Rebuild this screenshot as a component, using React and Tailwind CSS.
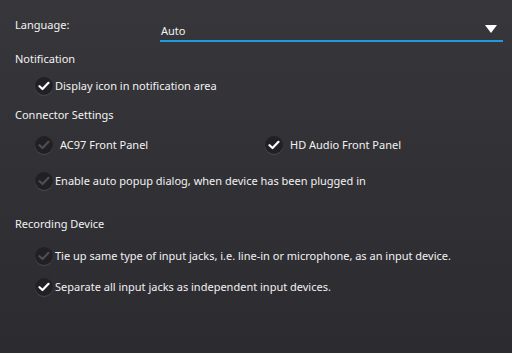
import React from "react";

function Check({ checked }) {
  return (
    <div className="w-[18px] h-[18px] rounded-full bg-[#212124] shadow-[0_1px_1px_rgba(90,90,96,0.6)] flex items-center justify-center shrink-0">
      <svg width="12" height="10" viewBox="0 0 12 10">
        <polyline
          points="1.5,5.2 4.5,8 10.5,1.8"
          fill="none"
          stroke={checked ? "#ffffff" : "#4d4d52"}
          strokeWidth="2.2"
          strokeLinecap="round"
          strokeLinejoin="round"
        />
      </svg>
    </div>
  );
}

function Row({ checked, label, gap = "ml-[2px]", className = "" }) {
  return (
    <div className={`flex items-center h-[18px] ${className}`}>
      <Check checked={checked} />
      <span className={`${gap} leading-[16px] whitespace-nowrap`}>{label}</span>
    </div>
  );
}

export default function App() {
  return (
    <div
      className="w-[512px] h-[353px] overflow-hidden bg-gradient-to-b from-[#37363b] to-[#2c2b30] text-[#f2f2f2] text-[11px] pt-[17px] pl-[15px] pr-[9px]"
      style={{ fontFamily: '"Noto Sans", "Open Sans", sans-serif' }}
    >
      <div className="flex">
        <div className="w-[145px] leading-[16px]">Language:</div>
        <div className="flex-1 flex justify-between pt-[6px] pb-[1px] pl-[1px] border-b-2 border-[#1e9ae0]">
          <span className="leading-[16px]">Auto</span>
          <svg width="12" height="8" viewBox="0 0 12 8" className="mt-[2px] mr-[6px]">
            <polygon points="0,0 12,0 6,8" fill="#ffffff" />
          </svg>
        </div>
      </div>

      <div className="mt-[9px] leading-[16px]">Notification</div>
      <Row className="mt-[10px] ml-[20px]" checked label="Display icon in notification area" />

      <div className="mt-[12px] leading-[16px]">Connector Settings</div>
      <div className="mt-[13px] flex">
        <Row className="ml-[20px] w-[230px]" gap="ml-[7px]" checked={false} label="AC97 Front Panel" />
        <Row gap="ml-[7px]" checked label="HD Audio Front Panel" />
      </div>
      <Row
        className="mt-[18px] ml-[20px]"
        checked={false}
        label="Enable auto popup dialog, when device has been plugged in"
      />

      <div className="mt-[26px] leading-[16px]">Recording Device</div>
      <Row
        className="mt-[15px] ml-[20px]"
        checked={false}
        label="Tie up same type of input jacks, i.e. line-in or microphone, as an input device."
      />
      <Row
        className="mt-[13px] ml-[20px]"
        checked
        label="Separate all input jacks as independent input devices."
      />
    </div>
  );
}
